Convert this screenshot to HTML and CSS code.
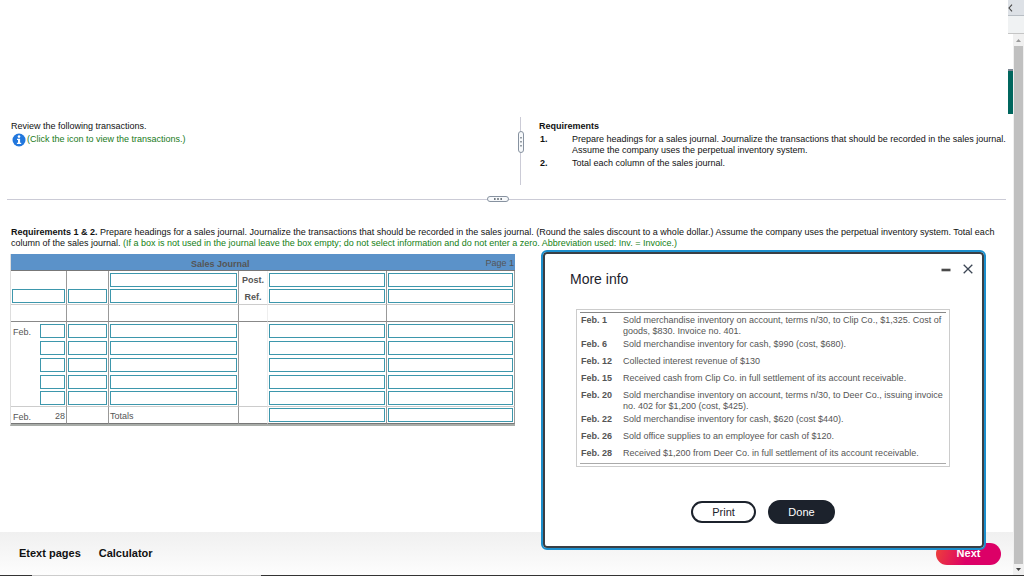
FILE: index.html
```html
<!DOCTYPE html>
<html lang="en">
<head>
<meta charset="utf-8">
<title>Sales Journal</title>
<link rel="stylesheet" href="styles.css">
</head>
<body>
<div class="app">
  <div class="page">
    <main class="content">
      <section class="split">
        <div class="prompt">
          <p>Review the following transactions.</p>
          <a class="view-link" href="#more-info">
            <svg class="info-icon" viewBox="0 0 14 14" aria-hidden="true"><circle cx="7" cy="7" r="6.5" fill="#2277dd"/><circle cx="7" cy="3.6" r="1.3" fill="#fff"/><path d="M5 5.7h3.1v4H9.2v1.2H4.9V9.7H6V6.9H5z" fill="#fff"/></svg>
            <span>(Click the icon to view the transactions.)</span>
          </a>
        </div>
        <div class="divider-v"><button class="grip grip-v" type="button" aria-label="Resize columns"><svg viewBox="0 0 4 20"><path d="M2 5v1.4M2 9v1.4M2 13v1.4" stroke="#555f6b" stroke-width="1.2"/></svg></button></div>
        <div class="requirements">
          <h2>Requirements</h2>
          <ol>
            <li><b>1.</b><span>Prepare headings for a sales journal. Journalize the transactions that should be recorded in the sales journal.<br>Assume the company uses the perpetual inventory system.</span></li>
            <li><b>2.</b><span>Total each column of the sales journal.</span></li>
          </ol>
        </div>
      </section>
      <div class="divider-h"><button class="grip grip-h" type="button" aria-label="Resize rows"><svg viewBox="0 0 20 4"><path d="M6 2h1.6M9.2 2h1.6M12.4 2H14" stroke="#444d58" stroke-width="1.6"/></svg></button></div>
      <p class="task"><b>Requirements 1 &amp; 2.</b> Prepare headings for a sales journal. Journalize the transactions that should be recorded in the sales journal. (Round the sales discount to a whole dollar.) Assume the company uses the perpetual inventory system. Total each column of the sales journal. <span class="hint">(If a box is not used in the journal leave the box empty; do not select information and do not enter a zero. Abbreviation used: Inv. = Invoice.)</span></p>
      <table class="journal">
        <colgroup><col class="c-month"><col class="c-day"><col class="c-inv"><col class="c-acct"><col class="c-ref"><col class="c-amt1"><col class="c-amt2"></colgroup>
        <thead>
          <tr class="title"><th colspan="5"><span>Sales Journal</span></th><td></td><td class="page-no">Page 1</td></tr>
          <tr class="entry"><td colspan="2"></td><td></td><td><input aria-label="Account heading, line 1"></td><th>Post.</th><td><input aria-label="Debit heading, line 1"></td><td><input aria-label="Credit heading, line 1"></td></tr>
          <tr class="entry"><td colspan="2"><input aria-label="Date heading"></td><td><input aria-label="Invoice heading"></td><td><input aria-label="Account heading, line 2"></td><th>Ref.</th><td><input aria-label="Debit heading, line 2"></td><td><input aria-label="Credit heading, line 2"></td></tr>
        </thead>
        <tbody>
          <tr class="blank"><td colspan="2"></td><td></td><td></td><td></td><td></td><td></td></tr>
          <tr class="entry"><td class="month">Feb.</td><td><input aria-label="Day 1"></td><td><input aria-label="Invoice 1"></td><td><input aria-label="Account 1"></td><td></td><td><input aria-label="Debit 1"></td><td><input aria-label="Credit 1"></td></tr>
          <tr class="entry"><td></td><td><input aria-label="Day 2"></td><td><input aria-label="Invoice 2"></td><td><input aria-label="Account 2"></td><td></td><td><input aria-label="Debit 2"></td><td><input aria-label="Credit 2"></td></tr>
          <tr class="entry"><td></td><td><input aria-label="Day 3"></td><td><input aria-label="Invoice 3"></td><td><input aria-label="Account 3"></td><td></td><td><input aria-label="Debit 3"></td><td><input aria-label="Credit 3"></td></tr>
          <tr class="entry"><td></td><td><input aria-label="Day 4"></td><td><input aria-label="Invoice 4"></td><td><input aria-label="Account 4"></td><td></td><td><input aria-label="Debit 4"></td><td><input aria-label="Credit 4"></td></tr>
          <tr class="entry"><td></td><td><input aria-label="Day 5"></td><td><input aria-label="Invoice 5"></td><td><input aria-label="Account 5"></td><td></td><td><input aria-label="Debit 5"></td><td><input aria-label="Credit 5"></td></tr>
        </tbody>
        <tfoot>
          <tr class="entry totals"><td class="month">Feb.</td><td class="day">28</td><td></td><td class="label">Totals</td><td></td><td><input aria-label="Debit total"></td><td><input aria-label="Credit total"></td></tr>
        </tfoot>
      </table>
    </main>
    <footer class="footer">
      <a href="#etext">Etext pages</a>
      <a href="#calculator">Calculator</a>
      <button class="next" type="button">Next</button>
    </footer>
  </div>
  <aside class="rail">
    <button class="rail-back" type="button" aria-label="Collapse"><svg viewBox="0 0 5 8"><path d="M4 .7 1 4l3 3.3" fill="none" stroke="#444" stroke-width="1.1"/></svg></button>
    <div class="rail-sub"></div>
    <div class="rail-body">
      <div class="rail-tab"></div>
      <div class="track">
        <svg viewBox="0 0 5 3"><path d="M0 3 2.5 0 5 3z" fill="#9a9a9a"/></svg>
        <div class="thumb"></div>
        <svg viewBox="0 0 5 3"><path d="M0 0h5L2.5 3z" fill="#444"/></svg>
      </div>
    </div>
  </aside>
  <section class="dialog" id="more-info" role="dialog" aria-labelledby="dialog-title">
    <header class="dialog-head">
      <h1 id="dialog-title">More info</h1>
      <button class="icon-btn" type="button" aria-label="Minimize"><svg viewBox="0 0 10 10"><path d="M.5 6h9" stroke="#4a4a4a" stroke-width="2.6"/></svg></button>
      <button class="icon-btn" type="button" aria-label="Close"><svg viewBox="0 0 10 10"><path d="m.7.7 8.6 8.6M9.3.7.7 9.3" stroke="#3c4654" stroke-width="1.3"/></svg></button>
    </header>
    <div class="ledger">
      <dl>
        <dt>Feb. 1</dt><dd>Sold merchandise inventory on account, terms n/30, to Clip Co., $1,325. Cost of<br>goods, $830. Invoice no. 401.</dd>
        <dt>Feb. 6</dt><dd>Sold merchandise inventory for cash, $990 (cost, $680).</dd>
        <dt>Feb. 12</dt><dd>Collected interest revenue of $130</dd>
        <dt>Feb. 15</dt><dd>Received cash from Clip Co. in full settlement of its account receivable.</dd>
        <dt>Feb. 20</dt><dd>Sold merchandise inventory on account, terms n/30, to Deer Co., issuing invoice<br>no. 402 for $1,200 (cost, $425).</dd>
        <dt>Feb. 22</dt><dd>Sold merchandise inventory for cash, $620 (cost $440).</dd>
        <dt>Feb. 26</dt><dd>Sold office supplies to an employee for cash of $120.</dd>
        <dt>Feb. 28</dt><dd>Received $1,200 from Deer Co. in full settlement of its account receivable.</dd>
      </dl>
    </div>
    <div class="actions">
      <button class="pill" type="button">Print</button>
      <button class="pill pill-dark" type="button">Done</button>
    </div>
  </section>
</div>
</body>
</html>
```
FILE: styles.css
```css
* { box-sizing: border-box; }
body, p, h1, h2, ol, dl, dd { margin: 0; padding: 0; }
body { background: #fff; color: #111; font: 9px/11px "Liberation Sans", Arial, sans-serif; }
button, input { font: inherit; padding: 0; border: 0; background: none; }
a { color: inherit; text-decoration: none; }
svg { display: block; }

.app { position: relative; display: flex; min-height: 100vh; padding-bottom: 1px; background: linear-gradient(90deg, #333 32px, #ccc 32px 261px, #333 261px) bottom / 100% 1px no-repeat; }
.page { flex: 1; min-width: 0; display: flex; flex-direction: column; }
.content { flex: 1; padding: 117px 7px 0 7px; }

.split { display: grid; grid-template-columns: 505px 17px 1fr; height: 68px; }
.prompt { padding: 4px; }
.view-link { display: flex; gap: 1px; margin-top: 1px; padding-left: 1px; color: #197a19; }
.view-link span { padding-top: 1px; }
.info-icon { width: 14px; height: 14px; }
.divider-v { display: flex; justify-content: center; background: linear-gradient(#cbcbd6, #cbcbd6) center / 1px 100% no-repeat; padding-top: 14px; }
.grip { border: 1px solid #8792a0; background: #f7f9fb; border-radius: 4px; }
.grip-v { width: 6px; height: 22px; }
.grip-h { width: 22px; height: 6px; }
.grip svg { width: 100%; height: 100%; }
.requirements { padding: 4px 0 0 10px; white-space: nowrap; }
.requirements h2 { font-size: 9px; line-height: 11px; }
.requirements ol { list-style: none; }
.requirements li { display: grid; grid-template-columns: 32px 1fr; padding: 2px 0 0 1px; }
.divider-h { display: flex; justify-content: center; margin-top: 11px; padding-right: 18px; background: linear-gradient(#cbcbd6, #cbcbd6) center / 100% 1px no-repeat; }
.task { margin: 25px 0 5px 4px; }
.hint { color: #138013; }

.journal { margin-left: 3px; width: 505px; table-layout: fixed; border-collapse: separate; border-spacing: 0; color: #555; border-bottom: 2px solid #a8aca8; border-left: 1px solid #ddd; }
.c-month { width: 28px; }
.c-day { width: 28px; }
.c-inv { width: 42px; }
.c-acct { width: 130px; }
.c-ref { width: 29px; }
.c-amt1 { width: 119px; }
.journal td, .journal th { padding: 1px; height: 17px; border-right: 1px solid #999; vertical-align: middle; }
.journal .entry th { padding-top: 3px; }
.journal .title th, .journal .title td { border: 0; border-bottom: 1px solid #777; background: #5b92c9; }
.journal .title th { text-align: left; padding: 4px 0 0; }
.journal .title span { padding-left: 180px; }
.journal .page-no { padding-top: 4px; text-align: right; }
.journal tr > :nth-last-child(3) { border-right-color: #eee; }
.journal tr.entry > :nth-last-child(7) { border-right: 0; }
.journal input { display: block; width: 100%; height: 14px; border: 1px solid #3d97ac; }
.journal thead tr:last-child > *, .journal tbody tr:last-child > * { border-bottom: 1px solid #ccc; }
.journal .blank td { border-bottom: 1px solid #888; }
.journal .totals td { border-bottom: 1px solid #777; }
.journal .month { padding: 4px 0 0 2px; }
.journal .day, .journal .label { padding-top: 4px; }
.journal .day { text-align: right; }

.footer { display: flex; align-items: center; gap: 18px; height: 43px; padding: 0 12px 0 19px; background: linear-gradient(#f0f0f0, #fdfdfd); font-size: 11px; font-weight: bold; color: #111; }
.next { margin-left: auto; width: 65px; height: 22px; border-radius: 11px; color: #fff; background: linear-gradient(110deg, #ee4438, #dc0067 50%); }

.rail { width: 16px; margin-left: -5px; display: flex; flex-direction: column; }
.rail-back { height: 16px; background: #dde1e6; border-bottom: 1px solid #b8bec4; }
.rail-back svg { width: 5px; height: 8px; }
.rail-sub { height: 18px; background: #f0f2f3; border-bottom: 1px solid #c5c5c5; }
.rail-body { flex: 1; display: flex; }
.rail-tab { width: 5px; height: 45px; margin-top: 35px; background: #00665e; border-top: 2px solid #7d8794; }
.track { flex: 1; display: flex; flex-direction: column; align-items: center; gap: 4px; padding: 5px 1px 4px; background: #f0f0f0; }
.track svg { width: 5px; height: 3px; }
.thumb { flex: 1; width: 100%; background: #c0c0c0; }

.dialog { position: absolute; top: 250px; left: 541px; width: 445px; padding: 17px 34px 24px 33px; border: 2px solid #1c8fcd; border-radius: 6px; background: #fff; box-shadow: inset 0 0 0 2px #3a3f45; color: #555; }
.dialog-head { display: flex; align-items: flex-start; gap: 12px; margin: 0 -23px 0 -6px; color: #1c222c; }
.dialog-head h1 { flex: 1; font-size: 14px; line-height: 20px; font-weight: normal; }
.icon-btn { width: 10px; height: 10px; margin-top: -5px; }
.ledger { margin-top: 20px; padding: 2px 3px; border: 1px solid #ccc; }
.ledger dl { display: grid; grid-template-columns: 42px 1fr; padding-left: 1px; border-top: 1px solid #888; border-bottom: 1px solid #aaa; white-space: nowrap; }
.ledger dt { font-weight: bold; }
.ledger dt, .ledger dd { min-height: 17px; padding-top: 2px; }
.actions { display: flex; justify-content: center; align-items: center; gap: 12px; margin-top: 33px; font-size: 11px; }
.pill { width: 65px; height: 22px; border: 2px solid #1c222c; border-radius: 12px; color: #1c222c; }
.pill-dark { width: 67px; height: 24px; background: #1c222c; color: #fff; }
```
